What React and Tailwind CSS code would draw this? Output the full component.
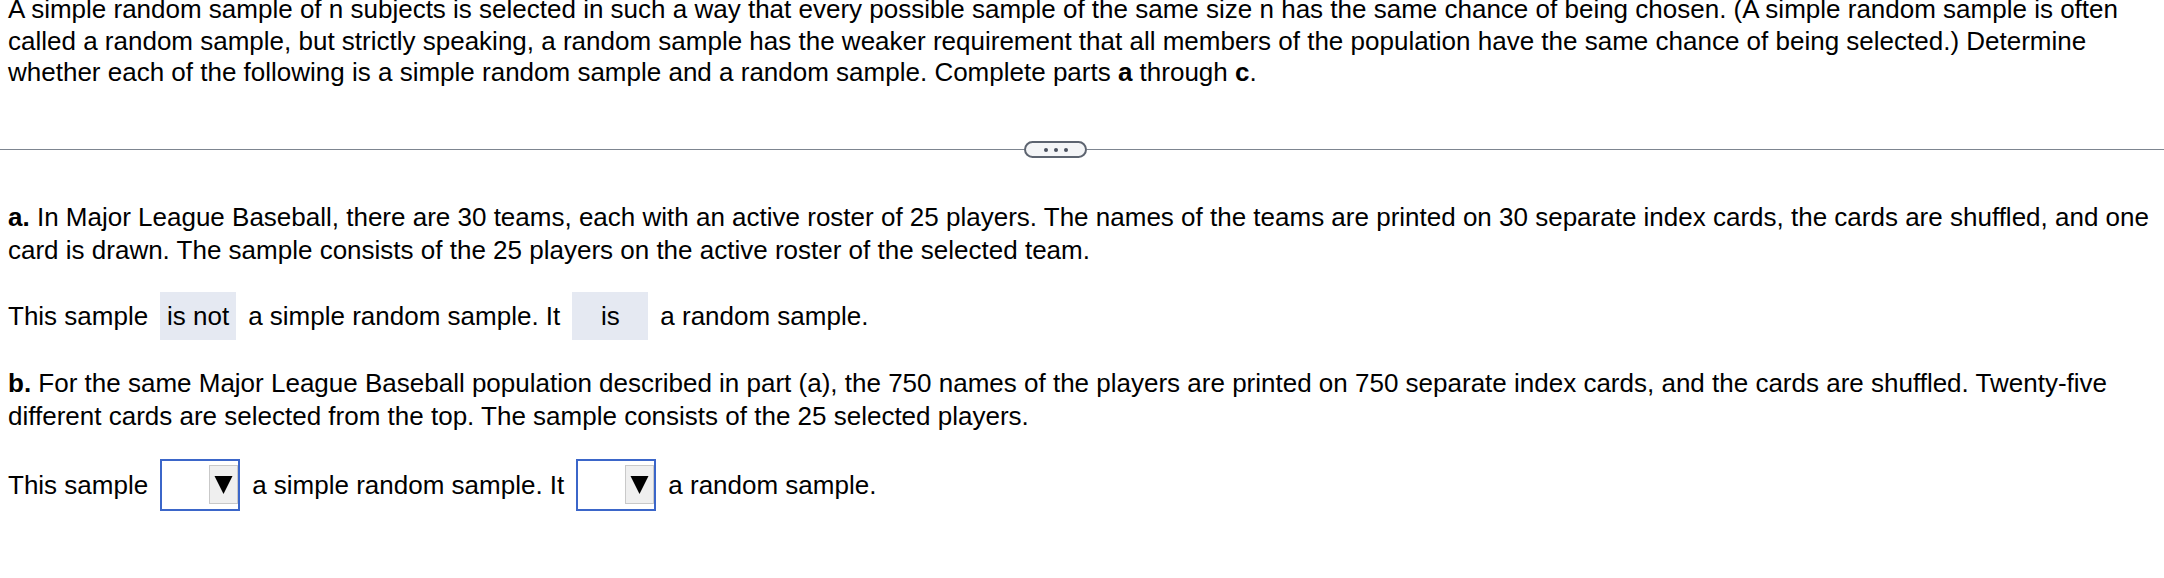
import React from 'react';

const Shaded = ({ children }) => (
  <span className="inline-flex items-center justify-center w-[76px] h-[48px] bg-[#e5e9f2]">{children}</span>
);

const Dropdown = () => (
  <span className="inline-flex items-center justify-end w-[80px] h-[52px] border-2 border-[#3b66c9] bg-white">
    <span className="flex items-center justify-center w-[29px] h-[39px] bg-[#efefef] border border-[#c9c9c9]">
      <svg width="19" height="19" viewBox="0 0 19 19">
        <polygon points="0.5,1 18.5,1 9.5,19" fill="#000" />
      </svg>
    </span>
  </span>
);

export default function App() {
  return (
    <div className="w-[2164px] h-[578px] overflow-hidden bg-white text-black font-['Liberation_Sans',Arial,Helvetica,sans-serif] text-[26px] leading-[32px]">
      <p className="px-2 mt-[-6px] leading-[31.5px]">
        A simple random sample of n subjects is selected in such a way that every possible sample of the same size n has the same chance of being chosen. (A simple random sample is often called a random sample, but strictly speaking, a random sample has the weaker requirement that all members of the population have the same chance of being selected.) Determine whether each of the following is a simple random sample and a random sample. Complete parts <b>a</b> through <b>c</b>.
      </p>

      <div className="flex items-center h-[18px] mt-[52px]">
        <div className="w-[1024px] h-[1.5px] bg-[#7d8590]" />
        <div className="flex items-center justify-center gap-[6px] w-[63px] h-[17px] rounded-full border-2 border-[#5d6470] bg-[#f4f5f7]">
          <span className="w-[4px] h-[4px] rounded-full bg-[#4b5260]" />
          <span className="w-[4px] h-[4px] rounded-full bg-[#4b5260]" />
          <span className="w-[4px] h-[4px] rounded-full bg-[#4b5260]" />
        </div>
        <div className="flex-1 h-[1.5px] bg-[#7d8590]" />
      </div>

      <p className="px-2 mt-[42px] leading-[33px]">
        <b>a.</b> In Major League Baseball, there are 30 teams, each with an active roster of 25 players. The names of the teams are printed on 30 separate index cards, the cards are shuffled, and one card is drawn. The sample consists of the 25 players on the active roster of the selected team.
      </p>

      <div className="flex items-center gap-3 px-2 mt-[25px]">
        <span>This sample</span>
        <Shaded>is not</Shaded>
        <span>a simple random sample. It</span>
        <Shaded>is</Shaded>
        <span>a random sample.</span>
      </div>

      <p className="px-2 mt-[27px] leading-[33px]">
        <b>b.</b> For the same Major League Baseball population described in part (a), the 750 names of the players are printed on 750 separate index cards, and the cards are shuffled. Twenty-five different cards are selected from the top. The sample consists of the 25 selected players.
      </p>

      <div className="flex items-center gap-3 px-2 mt-[26px]">
        <span>This sample</span>
        <Dropdown />
        <span>a simple random sample. It</span>
        <Dropdown />
        <span>a random sample.</span>
      </div>
    </div>
  );
}
